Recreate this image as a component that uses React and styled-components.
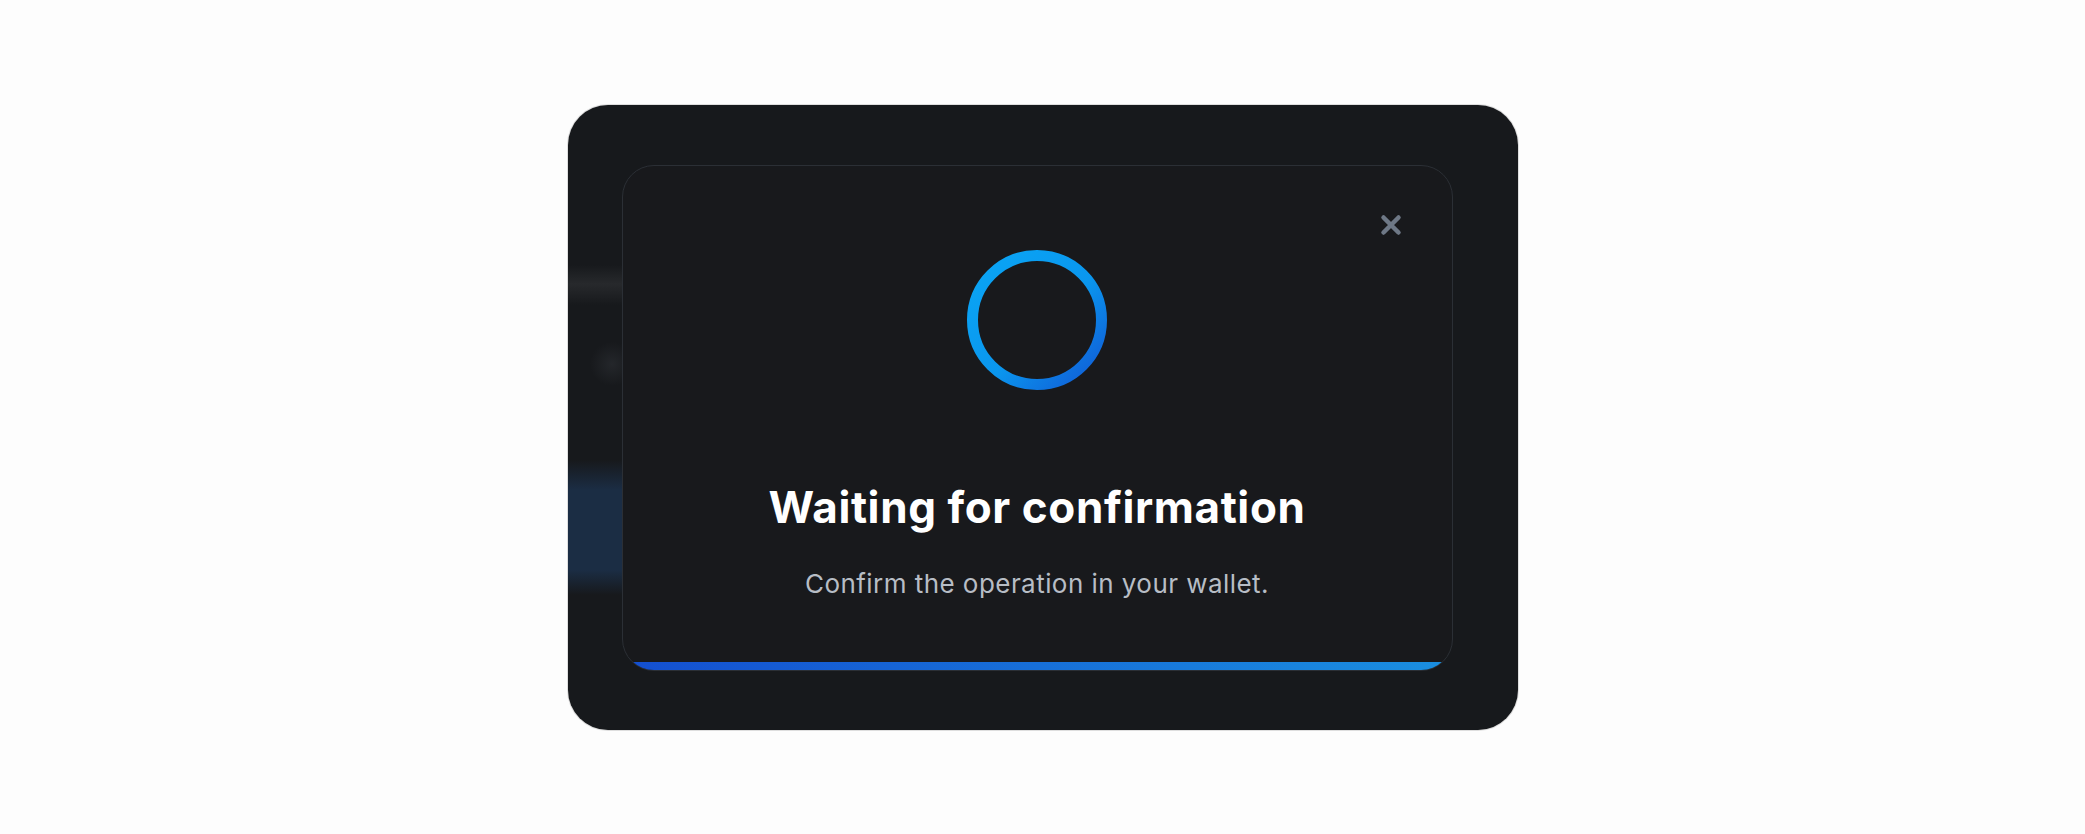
import React from "react";
import styled, { createGlobalStyle } from "styled-components";

const GlobalStyle = createGlobalStyle`
  html, body {
    margin: 0;
    padding: 0;
    background: #fdfdfd;
  }
  body {
    font-family: "Inter", "Lato", "Noto Sans", sans-serif;
  }
`;

const Page = styled.div`
  min-height: 100vh;
  display: flex;
  align-items: center;
  justify-content: center;
`;

// dark card behind the modal, with the blurred page bleeding through on the left
const Backdrop = styled.div`
  box-sizing: border-box;
  width: 950px;
  height: 625px;
  padding: 60px 65px 59px 54px;
  border-radius: 40px;
  background-color: #17191c;
  background-image:
    radial-gradient(circle at 44px 259px, rgba(60, 64, 70, 0.35) 0, rgba(60, 64, 70, 0) 22px),
    linear-gradient(
      to bottom,
      rgba(0, 0, 0, 0) 160px,
      #27292c 179px,
      rgba(0, 0, 0, 0) 200px,
      rgba(0, 0, 0, 0) 355px,
      #1b2d44 385px,
      #1b2d44 465px,
      rgba(0, 0, 0, 0) 490px
    );
  background-size: 100% 100%, 60px 100%;
  background-repeat: no-repeat;
  box-shadow: 0 0 0 1px rgba(0, 0, 0, 0.12);
  display: flex;
`;

const Modal = styled.div`
  position: relative;
  box-sizing: border-box;
  width: 831px;
  height: 506px;
  border: 1px solid #2b2f35;
  border-radius: 32px;
  background: #18191c;
  overflow: hidden;
  display: flex;
  flex-direction: column;
`;

const CloseButton = styled.button`
  position: absolute;
  top: 48px;
  right: 50px;
  width: 22px;
  height: 22px;
  padding: 0;
  border: 0;
  background: none;
  display: flex;
  align-items: center;
  justify-content: center;
  cursor: pointer;
`;

const Body = styled.div`
  display: flex;
  flex-direction: column;
  align-items: center;
  padding-top: 84px;
`;

const Spinner = styled.svg`
  display: block;
  width: 140px;
  height: 140px;
`;

const Title = styled.h2`
  margin: 91px 0 0;
  font-size: 44px;
  line-height: 1.2;
  font-weight: 700;
  color: #ffffff;
  letter-spacing: 0.6px;
`;

const Subtitle = styled.p`
  margin: 35px 0 0;
  font-size: 26px;
  line-height: 1.2;
  font-weight: 400;
  color: #b7bdc5;
  letter-spacing: 0.45px;
`;

const ProgressBar = styled.div`
  margin-top: auto;
  height: 8px;
  background: linear-gradient(to right, #144fd0, #1a8fe0);
`;

function CloseIcon() {
  return (
    <svg width="22" height="22" viewBox="0 0 22 22">
      <path
        d="M3.5 3.5 L18.5 18.5 M18.5 3.5 L3.5 18.5"
        stroke="#6e7886"
        strokeWidth="4.5"
        strokeLinecap="round"
      />
    </svg>
  );
}

function App() {
  return (
    <>
      <GlobalStyle />
      <Page>
        <Backdrop>
          <Modal>
            <CloseButton aria-label="Close">
              <CloseIcon />
            </CloseButton>
            <Body>
              <Spinner viewBox="0 0 140 140">
                <defs>
                  <linearGradient id="ring" x1="0" y1="0" x2="1" y2="1">
                    <stop offset="0" stopColor="#0aa6f5" />
                    <stop offset="0.55" stopColor="#0a96ee" />
                    <stop offset="1" stopColor="#1157d4" />
                  </linearGradient>
                </defs>
                <circle
                  cx="70"
                  cy="70"
                  r="64.5"
                  fill="none"
                  stroke="url(#ring)"
                  strokeWidth="11"
                />
              </Spinner>
              <Title>Waiting for confirmation</Title>
              <Subtitle>Confirm the operation in your wallet.</Subtitle>
            </Body>
            <ProgressBar />
          </Modal>
        </Backdrop>
      </Page>
    </>
  );
}

export default App;
